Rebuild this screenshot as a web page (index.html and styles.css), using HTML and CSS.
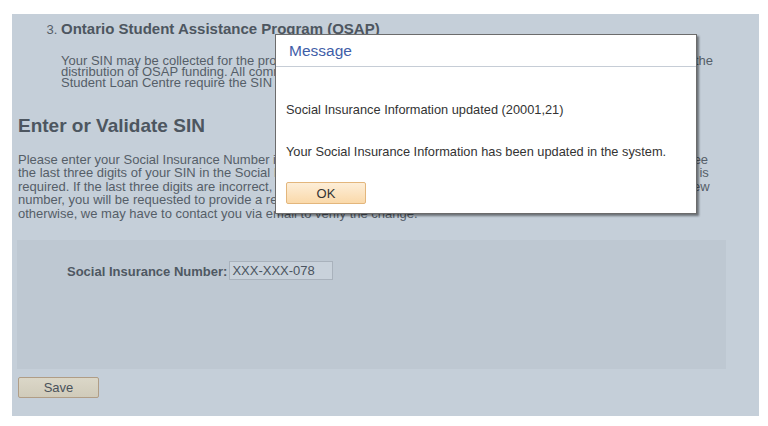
FILE: index.html
```html
<!DOCTYPE html>
<html lang="en">
<head>
<meta charset="utf-8">
<title>Enter or Validate SIN</title>
<link rel="stylesheet" href="styles.css">
</head>
<body>
<div class="page">
  <ol class="steps" start="3">
    <li>
      <span class="step-title">Ontario Student Assistance Program (OSAP)</span>
      <p class="step-text">Your SIN may be collected for the proper administration of government student assistance programs including the<br>distribution of OSAP funding. All communications with the Ministry and the National<br>Student Loan Centre require the SIN as an identifier.</p>
    </li>
  </ol>
  <h1 class="section-title">Enter or Validate SIN</h1>
  <p class="intro">Please enter your Social Insurance Number if you have one. If you have previously provided your SIN to us, you will see<br>the last three digits of your SIN in the Social Insurance Number field below. If these digits are correct, no further action is<br>required. If the last three digits are incorrect, please enter your correct nine-digit SIN. If you are adding a completely new<br>number, you will be requested to provide a record of your SIN to the Registrar's Office;<br>otherwise, we may have to contact you via email to verify the change.</p>
  <div class="sin-panel">
    <div class="sin-row">
      <label class="sin-label" for="sin">Social Insurance Number:</label>
      <input id="sin" class="sin-input" type="text" value="XXX-XXX-078" readonly>
    </div>
  </div>
  <button class="btn-save" type="button">Save</button>
</div>

<div class="dialog">
  <div class="dialog-header">Message</div>
  <div class="dialog-body">
    <p class="dialog-line">Social Insurance Information updated (20001,21)</p>
    <p class="dialog-line second">Your Social Insurance Information has been updated in the system.</p>
    <button class="btn-ok" type="button">OK</button>
  </div>
</div>
</body>
</html>
```

FILE: styles.css
```css
* { box-sizing: border-box; }

html, body {
  margin: 0;
  padding: 0;
  background: #ffffff;
}

body {
  font-family: "Liberation Sans", Arial, sans-serif;
  width: 768px;
  height: 426px;
  overflow: hidden;
}

.page {
  margin: 14px 0 0 12px;
  width: 747px;
  height: 402px;
  padding-top: 6px;
  background: #c5cfd9;
  color: #555e68;
}

.steps {
  margin: 0;
  padding: 0 0 0 49px;
}

.steps li::marker {
  font-weight: normal;
  font-size: 13px;
  color: #555e68;
}

.steps li {
  font-size: 13px;
}

.step-title {
  display: block;
  font-size: 15px;
  font-weight: bold;
  line-height: 17px;
  color: #4d5660;
}

.step-text {
  margin: 18px 0 0;
  font-size: 13px;
  line-height: 11px;
  white-space: nowrap;
}

.section-title {
  margin: 27px 0 0 6px;
  font-size: 19px;
  font-weight: bold;
  line-height: 22px;
  color: #4d5660;
}

.intro {
  margin: 15.5px 0 0 6px;
  font-size: 13px;
  line-height: 13.6px;
  white-space: nowrap;
}

.sin-panel {
  margin: 19.5px 0 0 5px;
  width: 709px;
  height: 129px;
  background: #bec8d2;
  padding: 21px 0 0 50px;
}

.sin-row {
  display: flex;
  align-items: flex-start;
  gap: 2px;
}

.sin-label {
  padding-top: 3px;
  font-size: 13px;
  line-height: 15px;
  font-weight: bold;
  color: #4f5862;
}

.sin-input {
  width: 104px;
  height: 19px;
  margin: 0;
  padding: 0 0 0 2px;
  border: 1px solid #a9b2bc;
  background: #c9d2db;
  font-family: "Liberation Sans", Arial, sans-serif;
  font-size: 13px;
  color: #4a5460;
  outline: none;
}

.btn-save {
  display: block;
  margin: 8px 0 0 6px;
  width: 81px;
  height: 21px;
  padding: 0;
  border: 1px solid #b09d86;
  border-radius: 2px;
  background: linear-gradient(#dbd7c8, #d0cbba);
  font-family: "Liberation Sans", Arial, sans-serif;
  font-size: 13px;
  color: #4a525b;
}

.dialog {
  position: absolute;
  left: 275px;
  top: 34px;
  width: 422px;
  height: 180px;
  background: #ffffff;
  border: 1px solid #6c6c6c;
  box-shadow: 2px 2px 2px rgba(0, 0, 0, 0.45);
}

.dialog-header {
  height: 32px;
  line-height: 31px;
  padding-left: 13px;
  font-size: 15.5px;
  color: #3f5ea8;
  border-bottom: 1px solid #c6cdd6;
}

.dialog-body {
  padding: 35px 0 0 10px;
}

.dialog-line {
  margin: 0;
  font-size: 12.8px;
  line-height: 15px;
  color: #333333;
}

.dialog-line.second {
  margin-top: 27px;
}

.btn-ok {
  display: block;
  margin: 23px 0 0 0;
  width: 80px;
  height: 22px;
  padding: 0;
  border: 1px solid #e3b67c;
  border-radius: 2px;
  background: linear-gradient(#fdeed8, #fad9aa);
  font-family: "Liberation Sans", Arial, sans-serif;
  font-size: 13px;
  color: #333333;
}
```
